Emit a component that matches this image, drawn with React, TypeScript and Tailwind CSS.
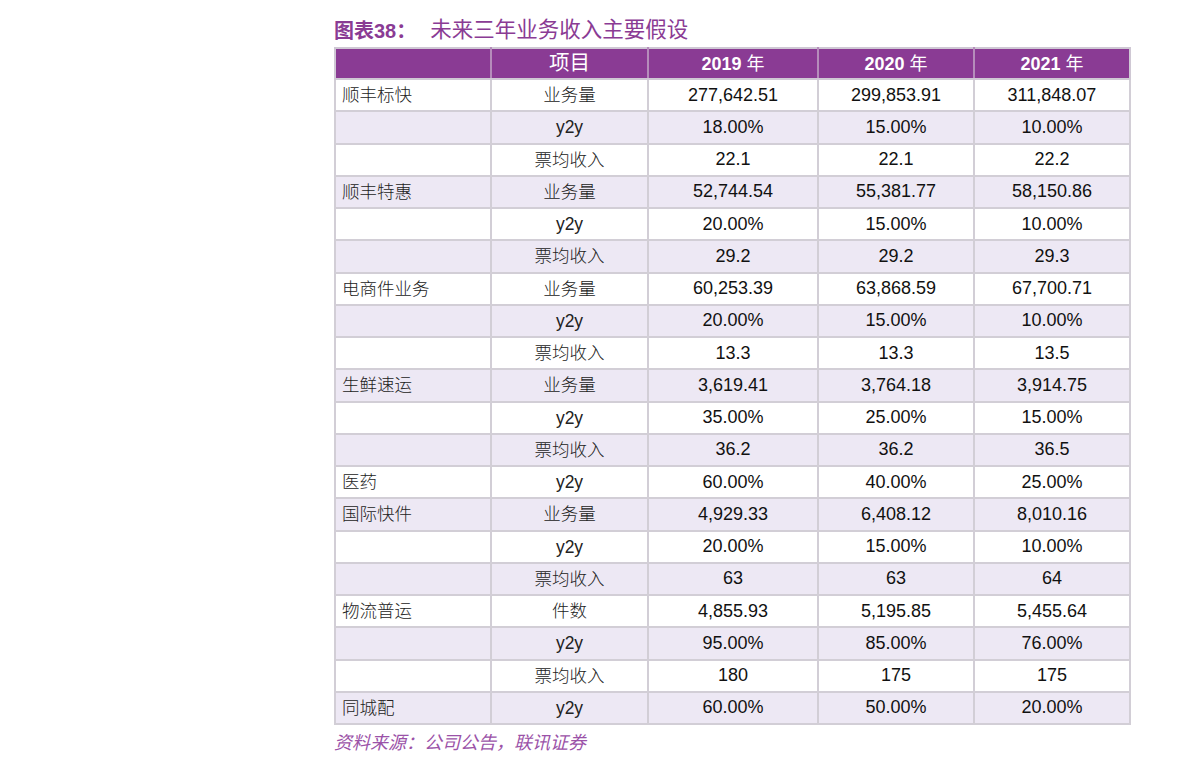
const rows: [string, string, string, string, string][] = [
  ['顺丰标快', '业务量', '277,642.51', '299,853.91', '311,848.07'],
  ['', 'y2y', '18.00%', '15.00%', '10.00%'],
  ['', '票均收入', '22.1', '22.1', '22.2'],
  ['顺丰特惠', '业务量', '52,744.54', '55,381.77', '58,150.86'],
  ['', 'y2y', '20.00%', '15.00%', '10.00%'],
  ['', '票均收入', '29.2', '29.2', '29.3'],
  ['电商件业务', '业务量', '60,253.39', '63,868.59', '67,700.71'],
  ['', 'y2y', '20.00%', '15.00%', '10.00%'],
  ['', '票均收入', '13.3', '13.3', '13.5'],
  ['生鲜速运', '业务量', '3,619.41', '3,764.18', '3,914.75'],
  ['', 'y2y', '35.00%', '25.00%', '15.00%'],
  ['', '票均收入', '36.2', '36.2', '36.5'],
  ['医药', 'y2y', '60.00%', '40.00%', '25.00%'],
  ['国际快件', '业务量', '4,929.33', '6,408.12', '8,010.16'],
  ['', 'y2y', '20.00%', '15.00%', '10.00%'],
  ['', '票均收入', '63', '63', '64'],
  ['物流普运', '件数', '4,855.93', '5,195.85', '5,455.64'],
  ['', 'y2y', '95.00%', '85.00%', '76.00%'],
  ['', '票均收入', '180', '175', '175'],
  ['同城配', 'y2y', '60.00%', '50.00%', '20.00%'],
];

const font = { fontFamily: '"Liberation Sans", Arial, "Noto Sans CJK SC", sans-serif' };

export default function App() {
  return (
    <div className="min-h-[771px] w-[1191px] bg-white" style={font}>
      <div className="ml-[334px] w-[795px] pt-[17px]">
        <div className="flex h-[28px] items-center leading-none text-[#8a3b94]">
          <span className="text-[20px] font-bold">图表38：</span>
          <span className="ml-[14px] text-[21.5px]">未来三年业务收入主要假设</span>
        </div>
        <table className="mt-[2px] w-[795px] table-fixed border-collapse text-[18px] text-[#111]">
          <colgroup>
            <col className="w-[156px]" />
            <col className="w-[157px]" />
            <col className="w-[170px]" />
            <col className="w-[156px]" />
            <col className="w-[156px]" />
          </colgroup>
          <thead>
            <tr className="h-[31px] bg-[#8a3b94] text-[18px] leading-none text-white">
              <th className="border-2 border-[#cfc8d4] border-r-[#b58dbb]" />
              <th className="border-2 border-[#cfc8d4] border-r-[#b58dbb] text-[20.5px] font-normal">项目</th>
              <th className="border-2 border-[#cfc8d4] border-r-[#b58dbb] font-bold">2019 <span className="font-normal">年</span></th>
              <th className="border-2 border-[#cfc8d4] border-r-[#b58dbb] font-bold">2020 <span className="font-normal">年</span></th>
              <th className="border-2 border-[#cfc8d4] font-bold">2021 <span className="font-normal">年</span></th>
            </tr>
          </thead>
          <tbody>
            {rows.map((r, i) => (
              <tr key={i} className={i % 2 === 1 ? 'h-[32.25px] bg-[#ede8f4]' : 'h-[32.25px] bg-white'}>
                <td className="border-2 border-[#d2ced6] pl-[6px] text-left text-[17.5px] font-light text-[#222]">{r[0]}</td>
                <td className="border-2 border-[#d2ced6] text-center text-[17.5px] font-light text-[#222]">{r[1]}</td>
                <td className="border-2 border-[#d2ced6] text-center">{r[2]}</td>
                <td className="border-2 border-[#d2ced6] text-center">{r[3]}</td>
                <td className="border-2 border-[#d2ced6] text-center">{r[4]}</td>
              </tr>
            ))}
          </tbody>
        </table>
        <div className="mt-[5px] text-[18px] italic text-[#9b52a8]">资料来源：公司公告，联讯证券</div>
      </div>
    </div>
  );
}
